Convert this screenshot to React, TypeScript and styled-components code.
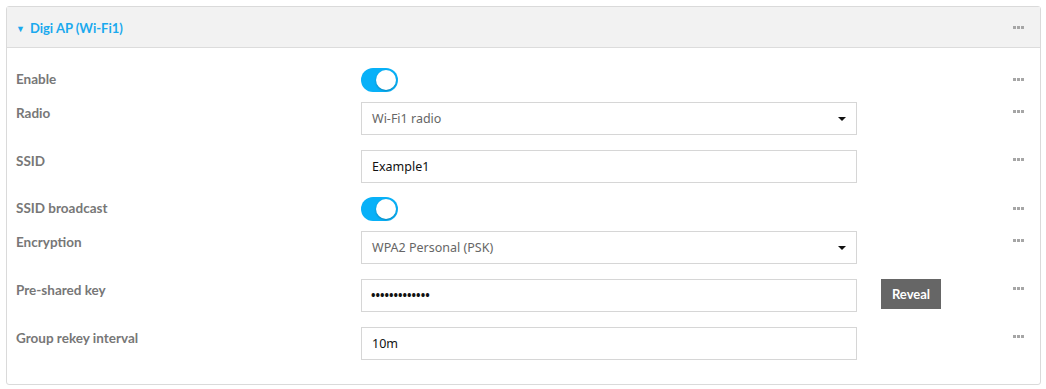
import styled, { createGlobalStyle } from "styled-components";

const GlobalStyle = createGlobalStyle`
  body {
    margin: 0;
    background: #ffffff;
    font-family: "Lato", "Open Sans", sans-serif;
  }
`

const Page = styled.div`
  padding: 6px 5px 4px 6px;
`

const Panel = styled.section`
  border: 1px solid #dadada;
  border-radius: 3px;
  background: #fff;
`

const PanelHeader = styled.header`
  height: 40px;
  background: #f2f2f2;
  border-bottom: 1px solid #dcdcdc;
  display: flex;
  align-items: center;
  justify-content: space-between;
  padding: 0 16px 0 9px;
`

const Title = styled.h2`
  margin: 0;
  font-size: 13px;
  font-weight: 700;
  color: #1aa9ee;
  display: flex;
  align-items: center;
  gap: 5px;
  padding-top: 2px;
`

const Caret = styled.span`
  font-size: 9px;
`

const Body = styled.div`
  padding: 20px 16px 24px 9px;
  display: flex;
  flex-direction: column;
`

const Row = styled.div<{ $gap?: number }>`
  display: grid;
  grid-template-columns: 345px 496px 1fr 12px;
  align-items: start;
  margin-bottom: ${p => p.$gap ?? 15}px;
  &:last-child {
    margin-bottom: 0;
  }
`

const Label = styled.label`
  font-size: 13.5px;
  font-weight: 700;
  color: #777;
  padding-top: 3px;
  line-height: 16px;
`

const Switch = styled.div`
  width: 37px;
  height: 24px;
  border-radius: 12px;
  background: #08b1f8;
  position: relative;

  &::after {
    content: "";
    position: absolute;
    top: 2px;
    right: 2px;
    width: 20px;
    height: 20px;
    border-radius: 50%;
    background: #fff;
    box-shadow: 0 1px 2px rgba(0, 0, 0, 0.25);
  }
`

const Field = styled.div<{ $muted?: boolean }>`
  height: 33px;
  box-sizing: border-box;
  border: 1px solid #d6d6d6;
  display: flex;
  align-items: center;
  justify-content: space-between;
  padding: 0 8px 0 10px;
  font-family: "Noto Sans", "Open Sans", sans-serif;
  font-size: 12.5px;
  color: ${p => (p.$muted ? "#666" : "#111")};
`

const SelectArrow = styled.span`
  width: 0;
  height: 0;
  border-left: 4px solid transparent;
  border-right: 4px solid transparent;
  border-top: 4px solid #111;
  margin-right: 2px;
`

const Dots = styled.span`
  font-family: "Noto Sans", sans-serif;
  font-size: 12px;
  font-weight: 700;
  letter-spacing: 0;
  color: #111;
  margin-left: -1px;
`

const Extra = styled.div`
  padding-left: 24px;
`

const RevealButton = styled.button`
  width: 60px;
  height: 30px;
  border: none;
  background: #666;
  color: #fff;
  font-family: "Lato", sans-serif;
  font-weight: 700;
  font-size: 13px;
  padding: 0;
`

const More = styled.div<{ $top?: number }>`
  display: flex;
  gap: 1px;
  padding-top: ${p => p.$top ?? 8}px;
  justify-self: end;
  span {
    width: 3px;
    height: 3px;
    background: #a6a6a6;
  }
`

function MoreIcon({ top }: { top?: number }) {
  return (
    <More $top={top}>
      <span />
      <span />
      <span />
    </More>
  )
}

export default function App() {
  return (
    <>
      <GlobalStyle />
      <Page>
        <Panel>
          <PanelHeader>
            <Title>
              <Caret>▼</Caret>
              Digi AP (Wi-Fi1)
            </Title>
            <MoreIcon top={0} />
          </PanelHeader>
          <Body>
            <Row $gap={10}>
              <Label>Enable</Label>
              <Switch />
              <div />
              <MoreIcon top={10} />
            </Row>
            <Row>
              <Label>Radio</Label>
              <Field $muted>
                Wi-Fi1 radio
                <SelectArrow />
              </Field>
              <div />
              <MoreIcon />
            </Row>
            <Row $gap={14}>
              <Label>SSID</Label>
              <Field>Example1</Field>
              <div />
              <MoreIcon />
            </Row>
            <Row $gap={10}>
              <Label>SSID broadcast</Label>
              <Switch />
              <div />
              <MoreIcon top={10} />
            </Row>
            <Row>
              <Label>Encryption</Label>
              <Field $muted>
                WPA2 Personal (PSK)
                <SelectArrow />
              </Field>
              <div />
              <MoreIcon />
            </Row>
            <Row>
              <Label>Pre-shared key</Label>
              <Field>
                <Dots>•••••••••••••</Dots>
              </Field>
              <Extra>
                <RevealButton>Reveal</RevealButton>
              </Extra>
              <MoreIcon />
            </Row>
            <Row>
              <Label>Group rekey interval</Label>
              <Field>10m</Field>
              <div />
              <MoreIcon />
            </Row>
          </Body>
        </Panel>
      </Page>
    </>
  )
}
